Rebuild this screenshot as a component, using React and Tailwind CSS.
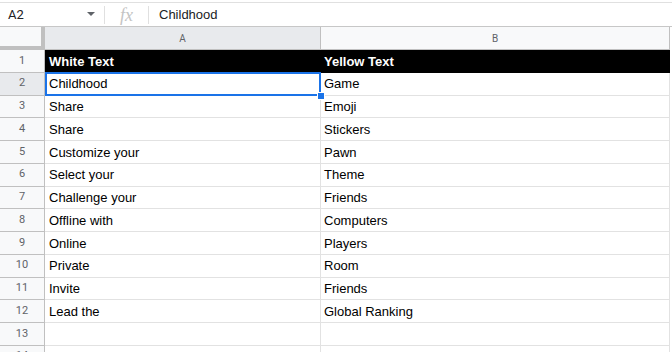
import React from "react";

const rows = [
  ["White Text", "Yellow Text"],
  ["Childhood", "Game"],
  ["Share", "Emoji"],
  ["Share", "Stickers"],
  ["Customize your", "Pawn"],
  ["Select your", "Theme"],
  ["Challenge your", "Friends"],
  ["Offline with", "Computers"],
  ["Online", "Players"],
  ["Private", "Room"],
  ["Invite", "Friends"],
  ["Lead the", "Global Ranking"],
  ["", ""],
  ["", ""],
];

export default function App() {
  return (
    <div className="w-[672px] h-[352px] overflow-hidden bg-white relative" style={{ fontFamily: "Arial, 'Liberation Sans', sans-serif" }}>
      {/* formula bar */}
      <div className="h-[2px] bg-white" />
      <div className="h-[1px] bg-[#e0e0e0]" />
      <div className="h-[24px] flex items-center border-b border-[#c7c7c7] bg-white">
        <div className="w-[104px] flex items-center pl-[8px] pr-[8px] h-full">
          <span className="text-[13px] text-[#202124] flex-1" style={{ fontFamily: "Roboto, sans-serif" }}>A2</span>
          <svg width="8" height="5" viewBox="0 0 8 5" className="mr-[1px]"><path d="M0 0 L8 0 L4 4 Z" fill="#5f6368" /></svg>
        </div>
        <div className="w-px h-[18px] bg-[#e0e0e0]" />
        <div className="w-[43px] flex items-center justify-center h-full">
          <span className="text-[18px] text-[#c4c4c4] italic leading-none" style={{ fontFamily: "'Liberation Serif', serif" }}>fx</span>
        </div>
        <div className="w-px h-[18px] bg-[#e0e0e0]" />
        <span className="ml-[10px] text-[13px] text-[#202124]" style={{ fontFamily: "'Liberation Sans', Arial, sans-serif" }}>Childhood</span>
      </div>

      {/* column header row */}
      <div className="flex h-[23px]">
        <div className="w-[45px] h-full bg-[#f8f9fa] border-r-[4px] border-b-[4px] border-[#c0c0c0]" />
        <div className="w-[276px] h-full bg-[#e8eaed] border-r border-b border-[#c0c0c0] flex items-center justify-center text-[10px] text-[#5f6368]" style={{ fontFamily: "Roboto, sans-serif" }}>A</div>
        <div className="w-[349px] h-full bg-[#f8f9fa] border-r border-b border-[#c0c0c0] flex items-center justify-center text-[10px] text-[#5f6368]" style={{ fontFamily: "Roboto, sans-serif" }}>B</div>
      </div>

      {rows.map((r, i) => {
        const header = i === 0;
        const sel = i === 1;
        return (
          <div key={i} className="flex h-[22.75px]">
            <div className={`w-[45px] h-full border-r border-b border-[#c0c0c0] flex items-center justify-center text-[11px] text-[#5f6368] ${sel ? "bg-[#e8eaed]" : "bg-[#f8f9fa]"}`} style={{ fontFamily: "Roboto, sans-serif" }}>
              {i + 1}
            </div>
            <div className={`w-[276px] h-full border-r border-b flex items-center pl-[4px] pt-[1px] text-[13px] ${header ? "bg-black text-white font-bold border-black" : "bg-white text-black border-[#e2e2e2]"}`}>
              {r[0]}
            </div>
            <div className={`w-[349px] h-full border-r border-b flex items-center pl-[3px] pt-[1px] text-[13px] ${header ? "bg-black text-white font-bold border-black" : "bg-white text-black border-[#e2e2e2]"}`}>
              {r[1]}
            </div>
          </div>
        );
      })}

      {/* selection */}
      <div className="absolute left-[45px] top-[72px] w-[276px] h-[24px] border-2 border-[#1a73e8] pointer-events-none" />
      <div className="absolute left-[317px] top-[92px] w-[6px] h-[6px] bg-[#1a73e8] border border-white box-content" />
    </div>
  );
}
